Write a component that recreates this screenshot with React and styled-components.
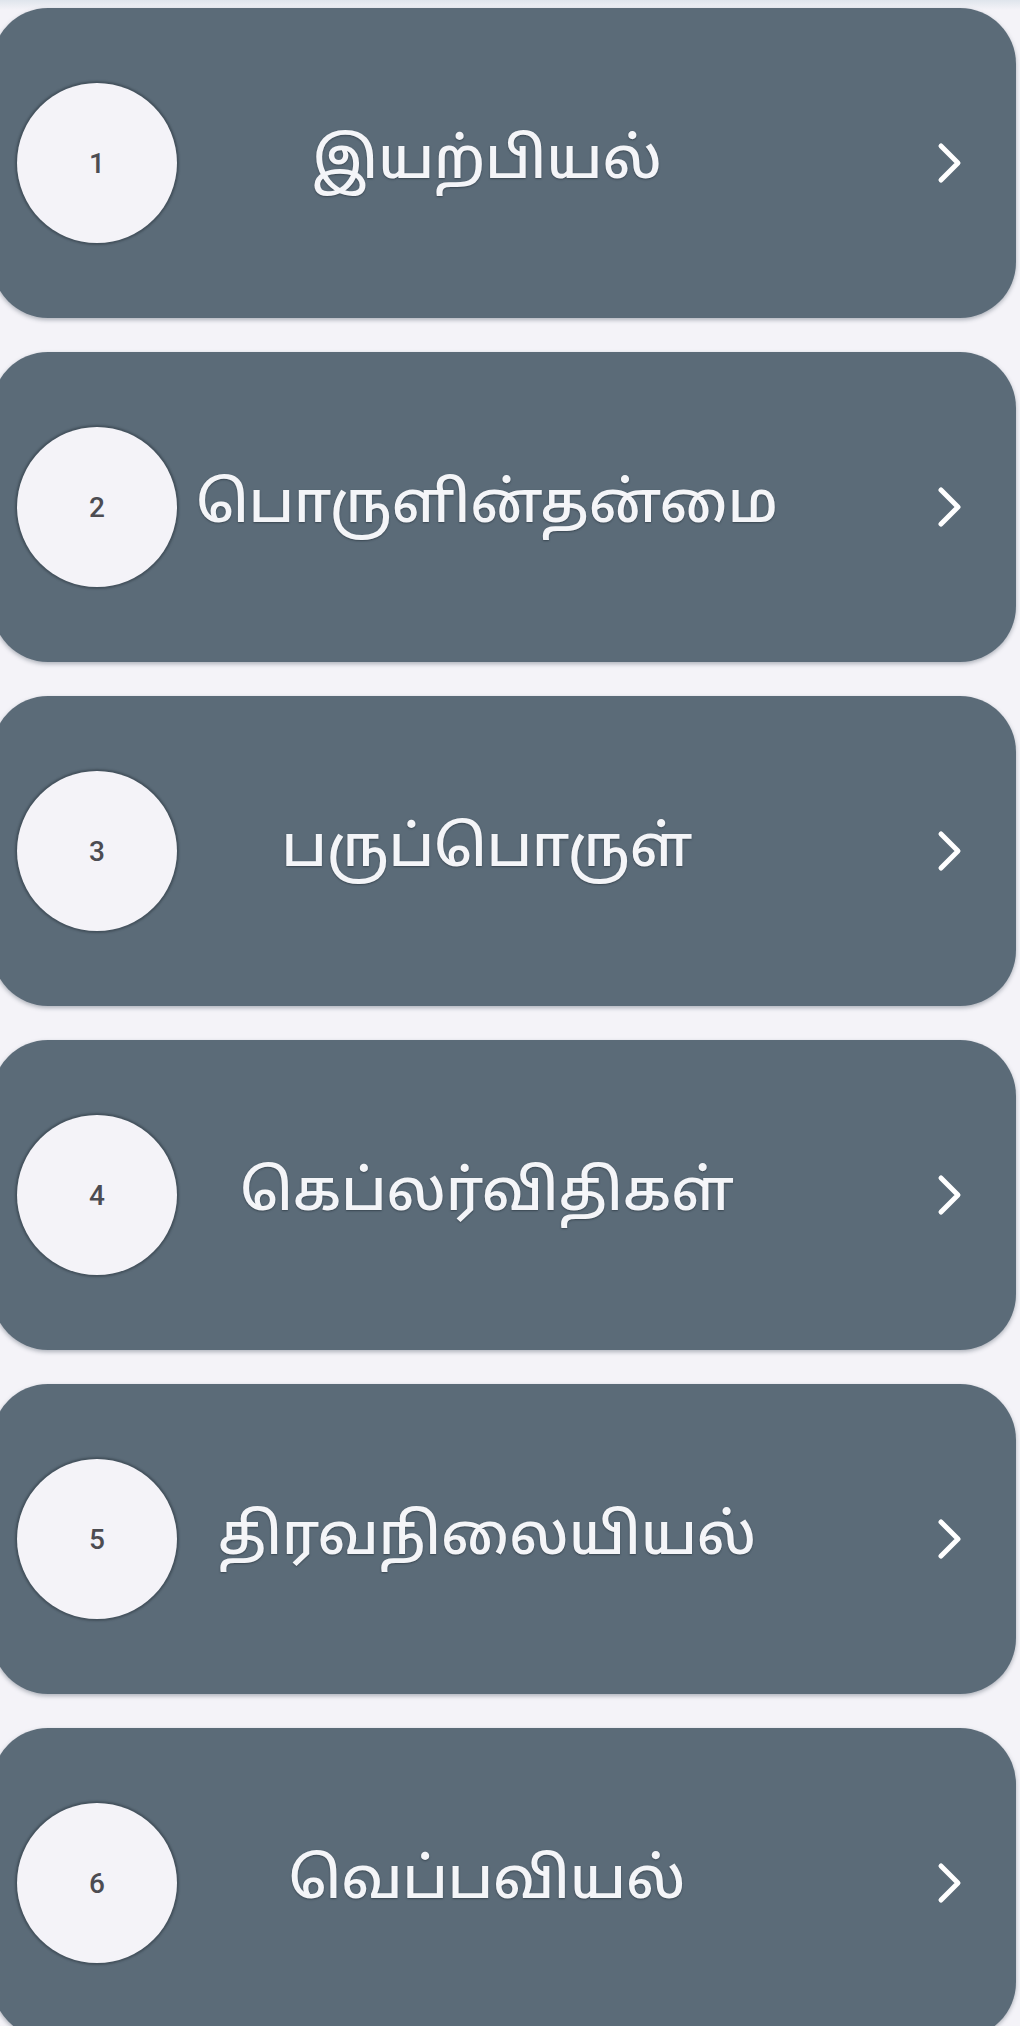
import React from 'react'
import styled, { createGlobalStyle } from 'styled-components'

const GlobalStyle = createGlobalStyle`
    html, body {
        margin:0;
        padding:0;
        background-color:#f4f3f8;
        overflow:hidden;
    }
`

const topics = [
    'இயற்பியல்',
    'பொருளின்தன்மை',
    'பருப்பொருள்',
    'கெப்லர்விதிகள்',
    'திரவநிலையியல்',
    'வெப்பவியல்',
]

function Chevron() {
    return (
        <svg width="34" height="50" viewBox="0 0 34 50" fill="none">
            <polyline points="9,8 26,25 9,42" stroke="#ffffff" strokeWidth="5" strokeLinecap="round" strokeLinejoin="round" />
        </svg>
    )
}

function App() {
    return (
        <Page>
            <GlobalStyle />
            <List>
                {topics.map((name, i) => (
                    <Card key={name}>
                        <Badge>{i + 1}</Badge>
                        <Title>{name}</Title>
                        <Arrow><Chevron /></Arrow>
                    </Card>
                ))}
            </List>
        </Page>
    )
}

const Page = styled.div`
    height:2026px;
    overflow:hidden;
    background:linear-gradient(#dfe5ec 0, #f4f3f8 10px);
    padding-top:8px;
    box-sizing:border-box;
`

const List = styled.div`
    display:flex;
    flex-direction:column;
    gap:34px;
    margin:0 4px 0 -8px;
`

const Card = styled.div`
    display:flex;
    align-items:center;
    flex-shrink:0;
    height:310px;
    background-color:#5b6b78;
    border-radius:56px;
    box-shadow:0 2px 4px rgba(40,55,70,0.35);
`

const Badge = styled.div`
    display:flex;
    align-items:center;
    justify-content:center;
    flex-shrink:0;
    width:160px;
    height:160px;
    margin-left:25px;
    border-radius:50%;
    background-color:#f4f3f8;
    box-shadow:0 0 2px 2px rgba(40,50,60,0.45);
    color:#4c4c52;
    font-family:Roboto, "Liberation Sans", sans-serif;
    font-size:28px;
    font-weight:500;
`

const Title = styled.div`
    flex:1;
    margin-right:135px;
    text-align:center;
    color:#f4f5f8;
    font-family:"Noto Sans Tamil", "Noto Sans Tamil UI", "Lohit Tamil", "Noto Sans", sans-serif;
    font-size:57px;
    font-weight:500;
    white-space:nowrap;
    text-shadow:0 1px 2px rgba(30,40,50,0.55);
`

const Arrow = styled.div`
    display:flex;
    align-items:center;
    margin-right:50px;
`

export default App
